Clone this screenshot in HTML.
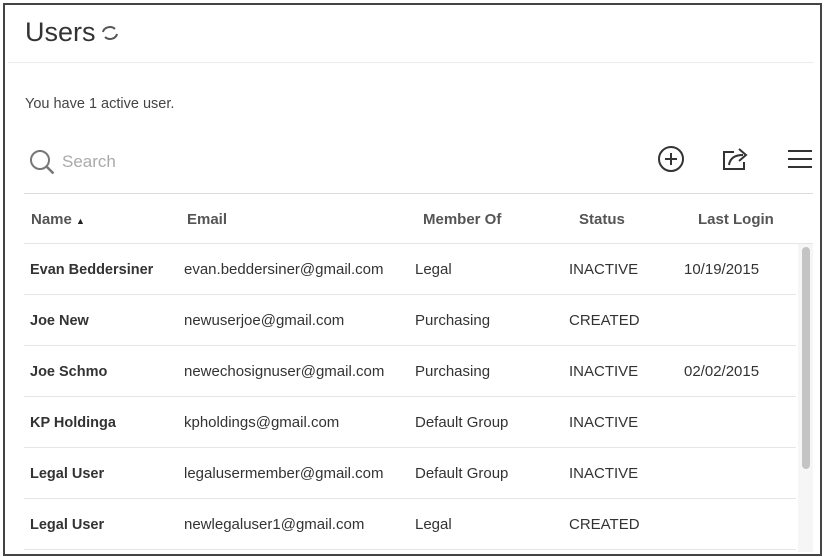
<!DOCTYPE html>
<html><head><style>
body{margin:0;width:824px;height:557px;background:#fff;font-family:"Liberation Sans",sans-serif;overflow:hidden;position:relative}
.frame{position:absolute;left:3px;top:3px;width:815px;height:549px;border:2px solid #444;box-sizing:content-box}
.a{position:absolute;white-space:nowrap}
.line{position:absolute;height:1px;background:#e6e6e6}
.r{position:absolute;font-size:15px;color:#333}
.b{font-size:14.5px;font-weight:bold;color:#333;margin-top:1px}
.h{position:absolute;font-size:15px;color:#555;font-weight:bold;top:211px}
</style></head><body>
<div class="frame"></div>
<div class="a" style="left:25px;top:17px;font-size:27px;color:#333">Users</div>
<svg class="a" style="left:100px;top:24px" width="20" height="18" viewBox="0 0 20 18"><path d="M3 8a7 6 0 0 1 12-3M17 10a7 6 0 0 1-12 3" fill="none" stroke="#555" stroke-width="2"/></svg>
<div class="line" style="left:8px;top:62px;width:806px;background:#ececec"></div>
<div class="a" style="left:25px;top:96px;font-size:14.5px;color:#444">You have 1 active user.</div>
<svg class="a" style="left:29px;top:149px" width="28" height="28" viewBox="0 0 28 28"><circle cx="11" cy="11" r="9" fill="none" stroke="#777" stroke-width="2"/><path d="M17.5 17.5l7 7" stroke="#777" stroke-width="2.5"/></svg>
<div class="a" style="left:62px;top:152px;font-size:17px;color:#aaa">Search</div>
<svg class="a" style="left:657px;top:145px" width="28" height="28" viewBox="0 0 28 28"><circle cx="14" cy="14" r="12" fill="none" stroke="#333" stroke-width="2"/><path d="M14 8v12M8 14h12" stroke="#333" stroke-width="2"/></svg>
<svg class="a" style="left:721px;top:146px" width="30" height="26" viewBox="0 0 30 26"><path d="M13 6H3v17h20v-7" fill="none" stroke="#333" stroke-width="2"/><path d="M8 19c1-7 6-10 14-10" fill="none" stroke="#333" stroke-width="2"/><path d="M18 3l7 6-7 6" fill="none" stroke="#333" stroke-width="2"/></svg>
<svg class="a" style="left:787px;top:149px" width="26" height="20" viewBox="0 0 26 20"><path d="M1 2h24M1 10h24M1 18h24" stroke="#333" stroke-width="2"/></svg>
<div class="line" style="left:24px;top:193px;width:789px;background:#ddd"></div>
<div class="h" style="left:31px">Name <span style="font-size:9px;color:#222">▲</span></div>
<div class="h" style="left:187px">Email</div>
<div class="h" style="left:423px">Member Of</div>
<div class="h" style="left:579px">Status</div>
<div class="h" style="left:698px">Last Login</div>
<div class="line" style="left:24px;top:243px;width:789px"></div>
<div class="line" style="left:24px;top:294px;width:772px"></div>
<div class="line" style="left:24px;top:345px;width:772px"></div>
<div class="line" style="left:24px;top:396px;width:772px"></div>
<div class="line" style="left:24px;top:447px;width:772px"></div>
<div class="line" style="left:24px;top:498px;width:772px"></div>
<div class="line" style="left:24px;top:549px;width:772px"></div>
<div class="a" style="left:798px;top:244px;width:15px;height:308px;background:#f6f6f6"></div>
<div class="a" style="left:802px;top:247px;width:8px;height:222px;background:#c4c4c4;border-radius:4px"></div>

<div class="r b" style="left:30px;top:261px">Evan Beddersiner</div>
<div class="r" style="left:184px;top:261px">evan.beddersiner@gmail.com</div>
<div class="r" style="left:415px;top:261px">Legal</div>
<div class="r" style="left:569px;top:261px">INACTIVE</div>
<div class="r" style="left:684px;top:261px">10/19/2015</div>

<div class="r b" style="left:30px;top:312px">Joe New</div>
<div class="r" style="left:184px;top:312px">newuserjoe@gmail.com</div>
<div class="r" style="left:415px;top:312px">Purchasing</div>
<div class="r" style="left:569px;top:312px">CREATED</div>

<div class="r b" style="left:30px;top:363px">Joe Schmo</div>
<div class="r" style="left:184px;top:363px">newechosignuser@gmail.com</div>
<div class="r" style="left:415px;top:363px">Purchasing</div>
<div class="r" style="left:569px;top:363px">INACTIVE</div>
<div class="r" style="left:684px;top:363px">02/02/2015</div>

<div class="r b" style="left:30px;top:414px">KP Holdinga</div>
<div class="r" style="left:184px;top:414px">kpholdings@gmail.com</div>
<div class="r" style="left:415px;top:414px">Default Group</div>
<div class="r" style="left:569px;top:414px">INACTIVE</div>

<div class="r b" style="left:30px;top:465px">Legal User</div>
<div class="r" style="left:184px;top:465px">legalusermember@gmail.com</div>
<div class="r" style="left:415px;top:465px">Default Group</div>
<div class="r" style="left:569px;top:465px">INACTIVE</div>

<div class="r b" style="left:30px;top:516px">Legal User</div>
<div class="r" style="left:184px;top:516px">newlegaluser1@gmail.com</div>
<div class="r" style="left:415px;top:516px">Legal</div>
<div class="r" style="left:569px;top:516px">CREATED</div>
</body></html>
